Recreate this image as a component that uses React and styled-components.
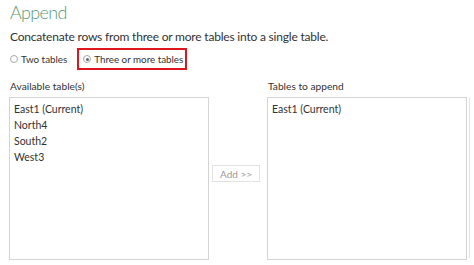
import React, { useState } from 'react';
import styled, { createGlobalStyle } from 'styled-components';

const GlobalStyle = createGlobalStyle`
  html, body {
    margin: 0;
    padding: 0;
    background: #ffffff;
  }
  body {
    font-family: Lato, "Open Sans", sans-serif;
    color: #333333;
  }
`;

const Page = styled.div`
  width: 474px;
  height: 265px;
  box-sizing: border-box;
  padding: 0 0 0 10px;
  overflow: hidden;
`;

const Title = styled.h1`
  margin: 0;
  font-size: 18px;
  font-weight: 300;
  line-height: 24px;
  letter-spacing: -0.7px;
  color: #5a9a74;
`;

const Description = styled.p`
  margin: 5px 0 0;
  font-size: 12px;
  letter-spacing: -0.2px;
  line-height: 16px;
  color: #333333;
`;

const RadioRow = styled.div`
  display: flex;
  align-items: center;
  margin-top: 3px;
  height: 22px;
`;

const RadioOption = styled.label`
  display: flex;
  align-items: center;
  gap: 3px;
  height: 18px;
  padding: ${p => (p.$highlight ? '0 2px 0 4px' : '0')};
  margin-right: ${p => (p.$highlight ? '0' : '10px')};
  border: ${p => (p.$highlight ? '2px solid #e0161e' : 'none')};
  font-size: 9.8px;
  color: #333333;
  cursor: pointer;
`;

const RadioDot = styled.span`
  width: 6px;
  height: 6px;
  border-radius: 50%;
  border: 1px solid #a8a8a8;
  background: #ffffff;
  display: flex;
  align-items: center;
  justify-content: center;
  &::after {
    content: '';
    width: 3px;
    height: 3px;
    border-radius: 50%;
    background: ${p => (p.$checked ? '#666666' : 'transparent')};
  }
`;

const Columns = styled.div`
  display: flex;
  align-items: flex-start;
  margin-top: 9px;
  margin-left: -1px;
`;

const Column = styled.div`
  display: flex;
  flex-direction: column;
`;

const Label = styled.div`
  font-size: 10.2px;
  line-height: 14px;
  height: 16px;
  padding-left: 1px;
  color: #333333;
`;

const ListBox = styled.div`
  width: 198px;
  height: 158px;
  margin-top: 2px;
  border: 1px solid #d4d4d4;
  box-sizing: content-box;
  padding-top: 3px;
`;

const ListItem = styled.div`
  font-size: 10.5px;
  line-height: 16px;
  padding-left: 4px;
  color: #333333;
`;

const Middle = styled.div`
  width: 58px;
  display: flex;
  justify-content: flex-start;
  padding-left: 3px;
  box-sizing: border-box;
  padding-top: 86px;
`;

const AddButton = styled.button`
  width: 48px;
  height: 17px;
  padding: 0;
  border: 1px solid #e3e3e3;
  background: #ffffff;
  font-family: inherit;
  font-size: 10px;
  color: #9a9a9a;
  cursor: default;
`;

const ScrollEdge = styled.div`
  width: 1px;
  height: 161px;
  margin-top: 18px;
  margin-left: 2px;
  background: #e4e4e4;
`;

const App = () => {
  const [mode, setMode] = useState('three');
  const available = ['East1 (Current)', 'North4', 'South2', 'West3'];

  return (
    <Page>
      <GlobalStyle />
      <Title>Append</Title>
      <Description>Concatenate rows from three or more tables into a single table.</Description>
      <RadioRow>
        <RadioOption onClick={() => setMode('two')}>
          <RadioDot $checked={mode === 'two'} />
          Two tables
        </RadioOption>
        <RadioOption $highlight onClick={() => setMode('three')}>
          <RadioDot $checked={mode === 'three'} />
          Three or more tables
        </RadioOption>
      </RadioRow>
      <Columns>
        <Column>
          <Label>Available table(s)</Label>
          <ListBox>
            {available.map(name => (
              <ListItem key={name}>{name}</ListItem>
            ))}
          </ListBox>
        </Column>
        <Middle>
          <AddButton>Add &gt;&gt;</AddButton>
        </Middle>
        <Column>
          <Label>Tables to append</Label>
          <ListBox>
            <ListItem>East1 (Current)</ListItem>
          </ListBox>
        </Column>
        <ScrollEdge />
      </Columns>
    </Page>
  );
};

export default App;
